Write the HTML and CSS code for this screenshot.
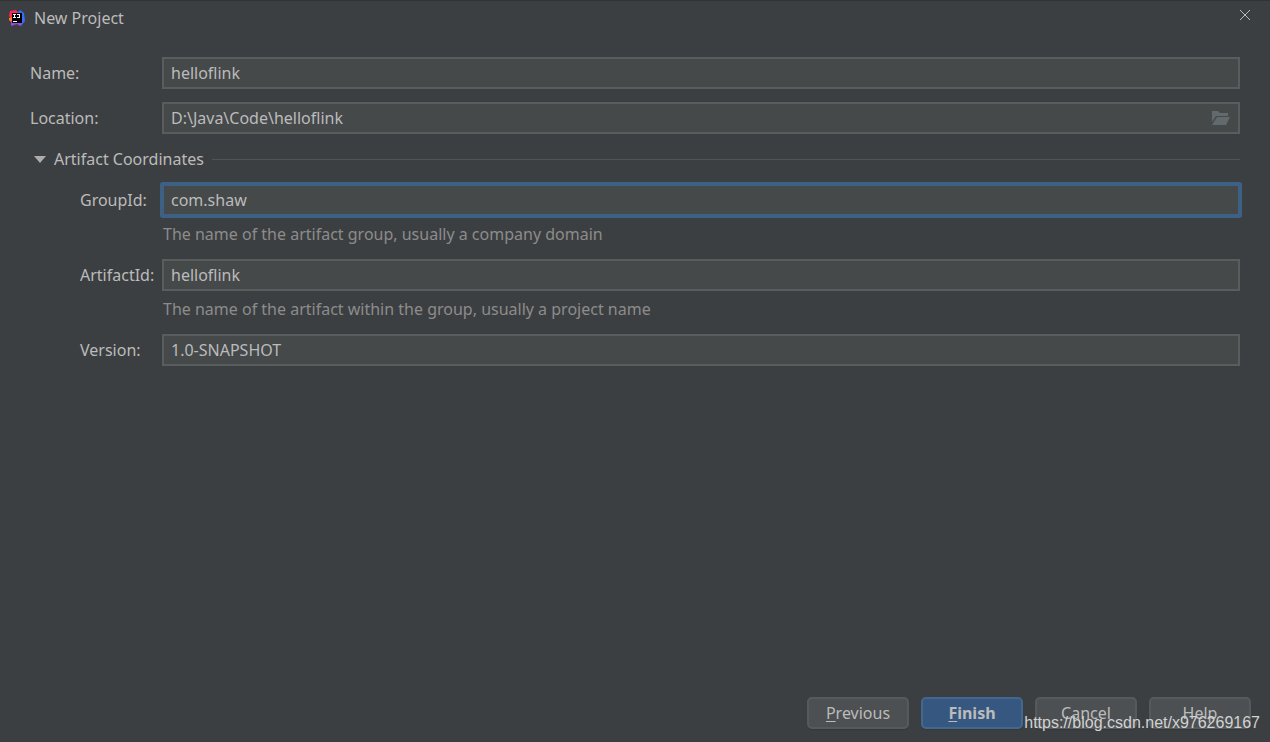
FILE: index.html
```html
<!DOCTYPE html>
<html lang="en">
<head>
    <meta charset="UTF-8">
    <meta name="viewport" content="width=device-width, initial-scale=1.0">
    <title>New Project</title>
    <link rel="stylesheet" href="styles.css">
</head>
<body>
    <header class="titlebar">
        <svg class="logo" viewBox="0 0 16 16" aria-hidden="true">
            <path d="M1 1l6-1 2 2-1 8H3L0 6z" fill="#fe2857"/>
            <path d="M0 8l4-1 3 7-4-1-3-3z" fill="#fc801d"/>
            <path d="M8 3l3-3 4 3 1 8-4 5-5-3z" fill="#3b6cf5"/>
            <path d="M2 11l5 1 6 1-2 3-3-2-6 2z" fill="#a045e8"/>
            <path d="M3 3h10v10H3z" fill="#000"/>
            <path d="M4 4h3v1H6v2h1v1H4V7h1V5H4zM8 4h3v4H8V7h2V5H8zM4 11h4v1H4z" fill="#fff"/>
        </svg>
        <h1>New Project</h1>
        <button class="close" type="button" aria-label="Close">
            <svg viewBox="0 0 12 12"><path d="M1 1l10 10M11 1L1 11"/></svg>
        </button>
    </header>

    <form class="dialog">
        <main class="fields">
            <div class="row">
                <label for="name">Name:</label>
                <input type="text" id="name" value="helloflink">
            </div>
            <div class="row">
                <label for="location">Location:</label>
                <div class="path-field">
                    <input type="text" id="location" value="D:\Java\Code\helloflink">
                    <button class="browse" type="button" aria-label="Browse">
                        <svg viewBox="0 0 20 16">
                            <path d="M1 1h6l2 2h8v3H5l-4 6z"/>
                            <path d="M6 7h13l-4 8H1z"/>
                        </svg>
                    </button>
                </div>
            </div>
            <details class="section" open>
                <summary>
                    <svg class="arrow" viewBox="0 0 12 7" aria-hidden="true"><path d="M0 0h12L6 7z"/></svg>
                    Artifact Coordinates
                </summary>
                <div class="row nested focused">
                    <label for="groupId">GroupId:</label>
                    <input type="text" id="groupId" value="com.shaw">
                    <p class="hint">The name of the artifact group, usually a company domain</p>
                </div>
                <div class="row nested">
                    <label for="artifactId">ArtifactId:</label>
                    <input type="text" id="artifactId" value="helloflink">
                    <p class="hint">The name of the artifact within the group, usually a project name</p>
                </div>
                <div class="row nested">
                    <label for="version">Version:</label>
                    <input type="text" id="version" value="1.0-SNAPSHOT">
                </div>
            </details>
        </main>

        <footer class="actions">
            <button type="button"><u>P</u>revious</button>
            <button type="button" class="primary"><u>F</u>inish</button>
            <button type="button">Cancel</button>
            <button type="button">Help</button>
        </footer>
    </form>
    <div class="watermark">https://blog.csdn.net/x976269167</div>
</body>
</html>
```

FILE: styles.css
```css
:root {
    --surface: #3c3f41;
    --field: #45494a;
    --border: #5a5d5e;
    --text: #bbbbbb;
    --hint: #8c8c8c;
    --focus: #3d6185;
}

* {
    box-sizing: border-box;
}

body {
    margin: 0;
    min-height: 100vh;
    display: flex;
    flex-direction: column;
    background: var(--surface);
    border-top: 1px solid #313335;
    color: var(--text);
    font-family: "Noto Sans", sans-serif;
    font-size: 16px;
    line-height: 24px;
}

button,
input {
    font: inherit;
    color: inherit;
}

.titlebar {
    display: flex;
    align-items: center;
    gap: 9px;
    height: 35px;
    padding: 0 19px 2px 9px;
}

.logo {
    width: 16px;
    height: 16px;
}

h1 {
    flex: 1;
    margin: 0;
    font-size: 16px;
    font-weight: 400;
}

.close {
    width: 12px;
    height: 24px;
    padding: 0;
    border: none;
    background: none;
    align-self: flex-start;
    margin-top: 2px;
}

.close svg {
    display: block;
    width: 12px;
    height: 12px;
    fill: none;
    stroke: var(--text);
}

.dialog {
    flex: 1;
    display: flex;
    flex-direction: column;
}

.fields {
    flex: 1;
    padding: 21px 30px;
}

.row {
    display: grid;
    grid-template-columns: 132px 1fr;
    align-items: center;
    margin-bottom: 13px;
}

.row.nested {
    grid-template-columns: 82px 1fr;
    margin-left: 50px;
}

input {
    width: 100%;
    height: 32px;
    padding: 0 7px;
    background: var(--field);
    border: 2px solid var(--border);
    outline: none;
}

.focused input {
    border-color: var(--focus);
    box-shadow: 0 0 0 2px var(--focus);
    border-radius: 1px;
}

.path-field {
    position: relative;
}

.path-field input {
    padding-right: 36px;
}

.browse {
    position: absolute;
    top: 8px;
    right: 9px;
    padding: 0;
    border: none;
    background: none;
}

.browse svg {
    display: block;
    width: 20px;
    height: 16px;
    fill: #626a6e;
}

.section summary {
    display: flex;
    align-items: center;
    margin-bottom: 13px;
    padding-left: 4px;
    list-style: none;
}

.section summary::after {
    content: "";
    flex: 1;
    height: 1px;
    margin-left: 8px;
    background: #515456;
}

.arrow {
    width: 12px;
    height: 7px;
    margin-right: 8px;
    fill: #adadad;
}

.hint {
    grid-column: 2;
    margin: 0;
    padding: 6px 0 0 1px;
    color: var(--hint);
}

.actions {
    display: flex;
    justify-content: flex-end;
    gap: 12px;
    padding: 0 19px 13px;
}

.actions button {
    width: 102px;
    height: 32px;
    padding: 0;
    background: #4c5052;
    border: 2px solid #565a5c;
    border-radius: 5px;
    box-shadow: 0 1px 1px #36393a;
}

.actions .primary {
    background: #365880;
    border-color: #43688f;
    font-weight: 700;
}

.actions u {
    text-underline-offset: 2px;
}

.watermark {
    position: absolute;
    right: 10px;
    bottom: 7px;
    color: #d2d2d2;
    font-family: "Liberation Sans", Arial, sans-serif;
    font-size: 16px;
    pointer-events: none;
}
```
